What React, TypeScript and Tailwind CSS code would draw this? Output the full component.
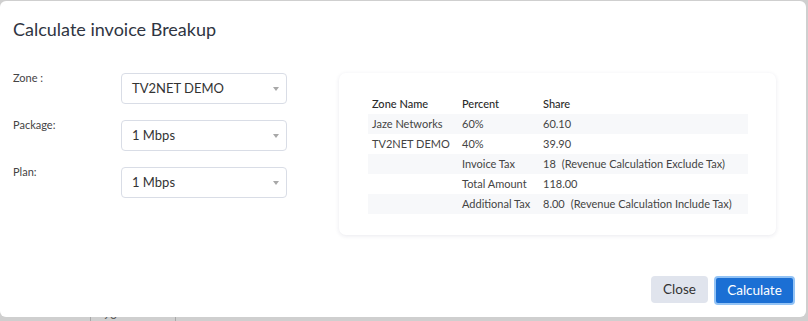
import React from 'react';

const rows = [
  { zone: 'Jaze Networks', percent: '60%', share: '60.10', note: '' },
  { zone: 'TV2NET DEMO', percent: '40%', share: '39.90', note: '' },
  { zone: '', percent: 'Invoice Tax', share: '18', note: '(Revenue Calculation Exclude Tax)' },
  { zone: '', percent: 'Total Amount', share: '118.00', note: '' },
  { zone: '', percent: 'Additional Tax', share: '8.00', note: '(Revenue Calculation Include Tax)' },
];

const SelectBox: React.FC<{ value: string }> = ({ value }) => (
  <div className="flex h-[31px] w-[166px] items-center justify-between rounded-[4px] border border-[#d9dde6] bg-white pl-[10px] pr-[7px] text-[13px] text-[#333]">
    <span>{value}</span>
    <span className="h-0 w-0 border-x-[3.5px] border-t-[4px] border-x-transparent border-t-[#a8a8a8]" />
  </div>
);

const App: React.FC = () => {
  return (
    <div className="h-[321px] w-[808px] overflow-hidden bg-[#cfcfcf] font-['Lato','Noto_Sans',sans-serif]">
      {/* Modal */}
      <div className="mt-px flex h-[316px] w-[806px] flex-col rounded-[6px] bg-white">
        {/* Header */}
        <div className="px-[13px] pt-[17px] text-[18px] leading-[22px] text-[#2f3542]">
          Calculate invoice Breakup
        </div>

        {/* Body */}
        <div className="mt-[33px] flex">
          {/* Form */}
          <div className="flex w-[339px] flex-col gap-[16px] pl-[13px]">
            {[
              { label: 'Zone :', value: 'TV2NET DEMO' },
              { label: 'Package:', value: '1 Mbps' },
              { label: 'Plan:', value: '1 Mbps' },
            ].map((f) => (
              <div key={f.label} className="flex">
                <div className="-mt-[2px] w-[108px] text-[11px] leading-[14px] text-[#444]">{f.label}</div>
                <SelectBox value={f.value} />
              </div>
            ))}
          </div>

          {/* Breakup card */}
          <div className="h-[162px] w-[437px] rounded-[7px] bg-white px-[29px] pt-[21px] shadow-[0_1px_4px_rgba(40,40,90,0.1)]">
            <table className="w-[380px] border-collapse whitespace-nowrap text-[11px] leading-[20px] text-[#444]">
              <thead>
                <tr className="text-left text-[#2a2a2a]">
                  <th className="w-[90px] pl-[4px] font-medium">Zone Name</th>
                  <th className="w-[81px] pl-[4px] font-medium">Percent</th>
                  <th className="pl-[4px] font-medium">Share</th>
                </tr>
              </thead>
              <tbody>
                {rows.map((r, i) => (
                  <tr key={i} className={i % 2 === 0 ? 'bg-[#f7f8fa]' : ''}>
                    <td className="pl-[4px]">{r.zone}</td>
                    <td className="pl-[4px]">{r.percent}</td>
                    <td className="pl-[4px]">
                      {r.share}
                      {r.note && <span className="ml-[6px]">{r.note}</span>}
                    </td>
                  </tr>
                ))}
              </tbody>
            </table>
          </div>
        </div>

        {/* Footer */}
        <div className="mt-auto flex justify-end gap-[6px] pb-[12px] pr-[11px]">
          <button className="h-[27px] w-[57px] rounded-[4px] bg-[#e0e4ed] text-[13.5px] text-[#333]">
            Close
          </button>
          <button className="h-[29px] w-[81px] rounded-[4px] border-2 border-[#93c3f5] bg-[#1b6fd4] text-[13.5px] text-white">
            Calculate
          </button>
        </div>
      </div>

      {/* Page behind the modal */}
      <div className="flex h-[4px] overflow-hidden">
        <div className="w-[90px]" />
        <div className="w-px bg-[#a9a9a9]" />
        <div className="w-[84px] pl-[12px] text-[12px] leading-[12px] text-[#555]">
          <span className="relative -top-[8px]">90</span>
        </div>
        <div className="w-px bg-[#a9a9a9]" />
      </div>
    </div>
  );
};

export default App;
